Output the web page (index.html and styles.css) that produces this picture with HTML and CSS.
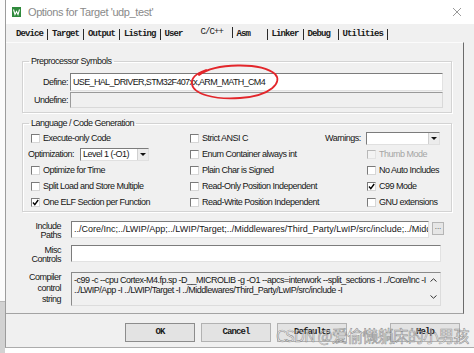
FILE: index.html
```html
<!DOCTYPE html>
<html lang="en">
<head>
<meta charset="utf-8">
<title>Options for Target 'udp_test'</title>
<link rel="stylesheet" href="styles.css">
</head>
<body>
<div class="screen">
  <div class="behind"><div class="behind-bottom"></div></div>
  <div class="window">
    <div class="titlebar">
      <svg class="appicon" viewBox="0 0 9 10" width="9" height="10">
        <rect x="0" y="0" width="9" height="10" fill="#2f8a3c"/>
        <path d="M1.5 2.5 L3 7.5 L4.5 4.5 L6 7.5 L7.5 2.5" fill="none" stroke="#fff" stroke-width="1.1"/>
      </svg>
      <span class="title">Options for Target 'udp_test'</span>
      <svg class="close" viewBox="0 0 10 10" width="10" height="10">
        <path d="M1 1 L9 9 M9 1 L1 9" stroke="#9a9a9a" stroke-width="1"/>
      </svg>
    </div>

    <div class="tabbar">
      <div class="tab">Device</div>
      <div class="tab">Target</div>
      <div class="tab">Output</div>
      <div class="tab">Listing</div>
      <div class="tab pre-active">User</div>
      <div class="tab active">C/C++</div>
      <div class="tab">Asm</div>
      <div class="tab">Linker</div>
      <div class="tab">Debug</div>
      <div class="tab">Utilities</div>
    </div>

    <div class="panel">
      <fieldset class="group pre">
        <legend>Preprocessor Symbols</legend>
        <div class="frow">
          <span class="flabel">Define:</span>
          <div class="input define">USE_HAL_DRIVER,STM32F407xx,ARM_MATH_CM4</div>
        </div>
        <div class="frow">
          <span class="flabel">Undefine:</span>
          <div class="input undefine"></div>
        </div>
      </fieldset>

      <fieldset class="group lang">
        <legend>Language / Code Generation</legend>
        <div class="lang-grid">
          <div class="cell"><span class="cb"></span>Execute-only Code</div>
          <div class="cell"><span class="cb"></span>Strict ANSI C</div>
          <div class="cell warn"><span>Warnings:</span>
            <div class="select wsel"><span class="sel-text"></span><span class="sel-btn"><i class="tri"></i></span></div>
          </div>

          <div class="cell opt"><span>Optimization:</span>
            <div class="select osel"><span class="sel-text">Level 1 (-O1)</span><span class="sel-btn"><i class="tri"></i></span></div>
          </div>
          <div class="cell"><span class="cb"></span>Enum Container always int</div>
          <div class="cell indent disabled"><span class="cb"></span>Thumb Mode</div>

          <div class="cell"><span class="cb"></span>Optimize for Time</div>
          <div class="cell"><span class="cb"></span>Plain Char is Signed</div>
          <div class="cell indent"><span class="cb"></span>No Auto Includes</div>

          <div class="cell"><span class="cb"></span>Split Load and Store Multiple</div>
          <div class="cell"><span class="cb"></span>Read-Only Position Independent</div>
          <div class="cell indent"><span class="cb checked"><svg viewBox="0 0 7 7" width="7" height="7"><path d="M1 3.5 L2.8 5.6 L6.2 1" fill="none" stroke="#000" stroke-width="1.4"/></svg></span>C99 Mode</div>

          <div class="cell"><span class="cb checked"><svg viewBox="0 0 7 7" width="7" height="7"><path d="M1 3.5 L2.8 5.6 L6.2 1" fill="none" stroke="#000" stroke-width="1.4"/></svg></span>One ELF Section per Function</div>
          <div class="cell"><span class="cb"></span>Read-Write Position Independent</div>
          <div class="cell indent"><span class="cb"></span>GNU extensions</div>
        </div>
      </fieldset>

      <div class="prow include">
        <div class="plabel">Include<br>Paths</div>
        <div class="input pinput">../Core/Inc;../LWIP/App;../LWIP/Target;../Middlewares/Third_Party/LwIP/src/include;../Middlewares</div>
        <div class="browse">...</div>
      </div>
      <div class="prow misc">
        <div class="plabel">Misc<br>Controls</div>
        <div class="input pinput"></div>
      </div>
      <div class="prow comp">
        <div class="plabel cl">Compiler<br>control<br>string</div>
        <div class="ctrl">
          <div class="ctext">
            <div>-c99 -c --cpu Cortex-M4.fp.sp -D__MICROLIB -g -O1 --apcs=interwork --split_sections -I ../Core/Inc -I</div>
            <div>../LWIP/App -I ../LWIP/Target -I ../Middlewares/Third_Party/LwIP/src/include -I</div>
          </div>
          <div class="scroll">
            <svg viewBox="0 0 7 4" width="7" height="4"><path d="M0.5 3.5 L3.5 0.8 L6.5 3.5" fill="none" stroke="#333" stroke-width="1"/></svg>
            <svg viewBox="0 0 7 4" width="7" height="4"><path d="M0.5 0.5 L3.5 3.2 L6.5 0.5" fill="none" stroke="#333" stroke-width="1"/></svg>
          </div>
        </div>
      </div>
    </div>

    <div class="buttons">
      <div class="btn default">OK</div>
      <div class="btn">Cancel</div>
      <div class="btn">Defaults</div>
      <div class="btn help">Help</div>
    </div>
  </div>
</div>

<svg class="annot" viewBox="0 0 100 45" width="100" height="45">
  <path d="M14 15 C30 3, 76 2, 90 14 C98 22, 86 36, 55 38 C30 40, 8 34, 7 24 C6 18, 12 13, 21 10" fill="none" stroke="#e3262b" stroke-width="1.8" stroke-linecap="round"/>
</svg>
<div class="watermark">CSDN @爱偷懒躺床的小男孩</div>
</body>
</html>
```

FILE: styles.css
```css
* { box-sizing: border-box; }
html, body { margin: 0; padding: 0; }
body {
  width: 474px;
  height: 353px;
  overflow: hidden;
  position: relative;
  background: #fff;
  font-family: "Liberation Sans", Arial, sans-serif;
  font-size: 9px;
  letter-spacing: -0.5px;
  color: #161616;
}

.screen { display: flex; height: 353px; }

.behind {
  width: 5px;
  height: 353px;
  display: flex;
  flex-direction: column;
  justify-content: flex-end;
  background: #fbfbfb;
}
.behind-bottom {
  height: 52px;
  background: #d2d2d2;
  border-top: 1px solid #b9b9b9;
}

.window {
  width: 469px;
  height: 348px;
  border-left: 1px solid #9c9c9c;
  border-bottom: 1px solid #acacac;
  background: #f0f0f0;
  display: flex;
  flex-direction: column;
}

/* title bar */
.titlebar {
  height: 24px;
  flex: none;
  background: #fff;
  display: flex;
  align-items: center;
  padding-left: 6px;
}
.appicon { display: block; margin-right: 7px; }
.title {
  font-size: 11px;
  letter-spacing: -0.4px;
  color: #8a8a8a;
}
.close { display: block; margin-left: auto; margin-right: 12px; }

/* tabs */
.tabbar {
  height: 18px;
  flex: none;
  display: flex;
  align-items: flex-end;
  padding-left: 6px;
}
.tab {
  font-family: "Liberation Mono", "Courier New", monospace;
  font-weight: bold;
  font-size: 9px;
  letter-spacing: -0.9px;
  line-height: 11px;
  height: 11px;
  min-width: 35px;
  padding: 0 4px;
  margin-bottom: 2px;
  border-right: 1px solid #2a2a2a;
  color: #1a1a1a;
  white-space: nowrap;
}
.tab.pre-active { border-right-color: transparent; }
.tab.active {
  font-weight: normal;
  min-width: 37px;
  padding-left: 5px;
  margin-bottom: 4px;
}

/* panel */
.panel {
  width: 458px;
  height: 272px;
  flex: none;
  border-top: 1px solid #fbfbfb;
  border-right: 1px solid #6b6b6b;
  border-bottom: 1px solid #a3a3a3;
  padding: 13px 11px 0 16px;
}

.group {
  margin: 0;
  padding: 0 8px 4px 0;
  border: 1px solid #d3d3d3;
  box-shadow: inset 1px 1px 0 #fff, 1px 1px 0 #fff;
  min-width: 0;
}
.group legend {
  margin-left: 6px;
  padding: 0 2px;
  line-height: 11px;
}

.frow { display: flex; align-items: center; }
.frow + .frow { margin-top: 1px; }
.pre .frow:first-of-type { margin-top: 6px; }
.flabel {
  width: 45px;
  margin-right: 2px;
  text-align: right;
  flex: none;
}

.input {
  flex: 1;
  min-width: 0;
  background: #fff;
  border: 1px solid;
  border-color: #7c7c7c #e2e2e2 #e2e2e2 #7c7c7c;
  padding-left: 2px;
  white-space: nowrap;
  overflow: hidden;
}
.define { height: 18px; line-height: 16px; letter-spacing: -0.65px; }
.undefine {
  height: 16px;
  background: #f0f0f0;
  border-color: #9a9a9a #d9d9d9 #d9d9d9 #9a9a9a;
}

/* language / code generation */
.lang { margin-top: 5px; padding-bottom: 0; }
.lang-grid {
  display: grid;
  grid-template-columns: 159px 135px 1fr;
  grid-auto-rows: 16px;
  padding: 1px 0 1px 8px;
}
.cell {
  display: flex;
  align-items: center;
  white-space: nowrap;
}
.cell.indent { padding-left: 42px; }
.cell.disabled { color: #a5a5a5; }
.cb {
  width: 9px;
  height: 9px;
  flex: none;
  margin-right: 3px;
  background: #fff;
  border: 1px solid;
  border-color: #7a7a7a #d6d6d6 #d6d6d6 #7a7a7a;
  display: flex;
  align-items: center;
  justify-content: center;
}
.cb svg { display: block; }
.disabled .cb { background: #f3f3f3; border-color: #b8b8b8 #e3e3e3 #e3e3e3 #b8b8b8; }

.opt { margin-left: -3px; }
.select {
  display: flex;
  height: 13px;
  background: #fff;
  border: 1px solid;
  border-color: #7c7c7c #e0e0e0 #e0e0e0 #7c7c7c;
}
.osel { width: 69px; margin-left: 6px; }
.wsel { width: 74px; margin-left: 5px; }
.sel-text { flex: 1; padding-left: 2px; line-height: 11px; }
.sel-btn {
  width: 11px;
  flex: none;
  background: #ececec;
  border-left: 1px solid #d0d0d0;
  display: flex;
  align-items: center;
  justify-content: center;
}
.tri {
  width: 0;
  height: 0;
  border-left: 3px solid transparent;
  border-right: 3px solid transparent;
  border-top: 3px solid #111;
}

/* paths area */
.prow { display: flex; align-items: flex-start; }
.include { margin-top: 9px; }
.misc { margin-top: 5px; }
.comp { margin-top: 8px; }
.plabel {
  width: 39px;
  margin-right: 10px;
  flex: none;
  text-align: right;
  line-height: 9px;
  padding-top: 1px;
}
.plabel.cl { line-height: 11px; padding-top: 0; }
.pinput { height: 17px; line-height: 15px; }
.include .pinput { padding-left: 2px; letter-spacing: 0; }
.misc .pinput { margin-right: 11px; }
.browse {
  width: 12px;
  height: 13px;
  margin: 1px 8px 0 3px;
  flex: none;
  background: #e6e6e6;
  border: 1px solid #b5b5b5;
  font-size: 8px;
  letter-spacing: 0;
  line-height: 7px;
  text-align: center;
  color: #444;
  overflow: hidden;
}

.ctrl {
  flex: 1;
  min-width: 0;
  height: 34px;
  margin-right: 11px;
  display: flex;
  background: #f0f0f0;
  border: 1px solid;
  border-color: #8a8a8a #dcdcdc #dcdcdc #8a8a8a;
}
.ctext {
  flex: 1;
  min-width: 0;
  padding: 2px 0 0 2px;
  line-height: 10px;
  white-space: nowrap;
  overflow: hidden;
}
.scroll {
  width: 13px;
  flex: none;
  display: flex;
  flex-direction: column;
  justify-content: space-between;
  align-items: center;
  padding: 5px 0 6px;
}
.scroll svg { display: block; }

/* buttons */
.buttons {
  flex: 1;
  display: flex;
  align-items: flex-start;
  gap: 6px;
  padding: 9px 0 0 119px;
}
.btn {
  width: 70px;
  height: 19px;
  flex: none;
  background: #e3e3e3;
  border: 1px solid #b2b2b2;
  font-family: "Liberation Mono", "Courier New", monospace;
  font-weight: bold;
  font-size: 9px;
  letter-spacing: -0.9px;
  line-height: 17px;
  text-align: center;
  color: #1a1a1a;
}
.btn.default { border-color: #8c8c8c; }
.btn.help { margin-left: auto; margin-right: 14px; }

/* overlays */
.annot {
  position: absolute;
  left: 185px;
  top: 60px;
  display: block;
}
.watermark {
  position: absolute;
  left: 276px;
  top: 325px;
  font-family: "Noto Sans CJK SC", "Noto Sans", sans-serif;
  font-size: 16px;
  letter-spacing: -0.8px;
  line-height: 20px;
  color: rgba(255, 255, 255, 0.55);
  -webkit-text-stroke: 0.6px rgba(95, 95, 95, 0.65);
  white-space: nowrap;
}
```
